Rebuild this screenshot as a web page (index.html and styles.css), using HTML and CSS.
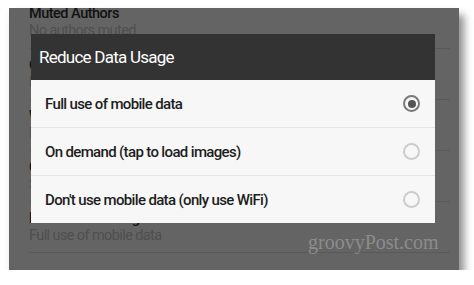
FILE: index.html
```html
<!DOCTYPE html>
<html>
<head>
<meta charset="utf-8">
<link rel="stylesheet" href="styles.css">
</head>
<body>
<div class="screen">
  <ul class="prefs">
    <li class="pref first">
      <div class="pref-title">Muted Authors</div>
      <div class="pref-sub">No authors muted</div>
    </li>
    <li class="pref">
      <div class="pref-title">Clear cache</div>
      <div class="pref-sub">Remove downloaded content</div>
    </li>
    <li class="pref">
      <div class="pref-title">Widget refresh</div>
      <div class="pref-sub">Every hour</div>
    </li>
    <li class="pref">
      <div class="pref-title">Content sync</div>
      <div class="pref-sub">Sync automatically</div>
    </li>
    <li class="pref">
      <div class="pref-title">Reduce Data Usage</div>
      <div class="pref-sub">Full use of mobile data</div>
    </li>
  </ul>

  <div class="watermark">groovyPost.com</div>

  <div class="dialog">
    <div class="dialog-title">Reduce Data Usage</div>
    <div class="option">
      <span class="option-label">Full use of mobile data</span>
      <span class="radio checked"></span>
    </div>
    <div class="option">
      <span class="option-label">On demand (tap to load images)</span>
      <span class="radio"></span>
    </div>
    <div class="option">
      <span class="option-label">Don't use mobile data (only use WiFi)</span>
      <span class="radio"></span>
    </div>
  </div>
</div>
</body>
</html>
```
FILE: styles.css
```css
html, body {
  margin: 0;
  padding: 0;
  background: #ffffff;
}
body {
  padding: 8px 0 0 9px;
  font-family: Roboto, "Liberation Sans", sans-serif;
}
.screen {
  position: relative;
  width: 450px;
  height: 262px;
  background: #646464;
  box-shadow: 5px 7px 8px rgba(0, 0, 0, 0.45);
  overflow: hidden;
}
.prefs {
  list-style: none;
  margin: 0;
  padding: 0 9px 0 20px;
}
.pref {
  height: 51px;
  border-bottom: 1px solid #5a5a5a;
  display: flex;
  flex-direction: column;
  justify-content: flex-end;
  padding-bottom: 8px;
  box-sizing: border-box;
}
.pref.first {
  height: 41px;
  padding-bottom: 9px;
}
.pref-title {
  color: #121212;
  font-size: 14.5px;
  font-weight: 500;
  line-height: 17px;
  letter-spacing: -0.5px;
}
.pref-sub {
  color: #4f4f4f;
  font-size: 14.5px;
  line-height: 17px;
  letter-spacing: -0.6px;
}
.watermark {
  position: absolute;
  left: 299px;
  top: 223px;
  font-family: "Liberation Serif", serif;
  font-size: 20px;
  color: #8c8c8c;
}
.dialog {
  position: absolute;
  left: 22px;
  top: 26px;
  width: 404px;
  background: #f7f7f7;
}
.dialog-title {
  height: 46px;
  background: #333333;
  color: #ffffff;
  font-size: 17px;
  letter-spacing: -0.75px;
  display: flex;
  align-items: center;
  padding-left: 8px;
  box-sizing: border-box;
}
.option {
  height: 48px;
  display: flex;
  align-items: center;
  justify-content: space-between;
  padding: 0 15px 0 14px;
  border-top: 1px solid #e4e4e4;
  box-sizing: border-box;
}
.dialog-title + .option {
  border-top: none;
  height: 47px;
}
.option-label {
  color: #1e1e1e;
  font-size: 15px;
  font-weight: 500;
  letter-spacing: -0.65px;
}
.radio {
  width: 17px;
  height: 17px;
  border-radius: 50%;
  border: 2px solid #cccccc;
  box-sizing: border-box;
  display: flex;
  align-items: center;
  justify-content: center;
}
.radio.checked {
  border: 2.5px solid #7a7a7a;
}
.radio.checked::after {
  content: "";
  width: 8px;
  height: 8px;
  border-radius: 50%;
  background: #555555;
}
```
